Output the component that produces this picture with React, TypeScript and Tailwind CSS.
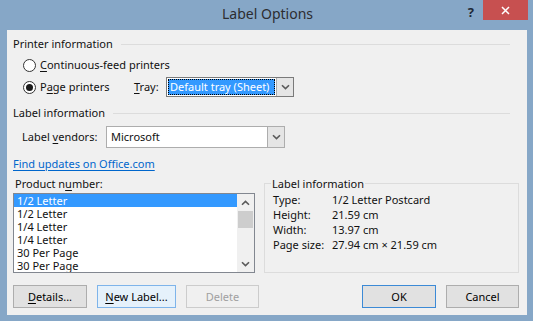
import { ReactNode } from "react";

const font = { fontFamily: '"Segoe UI", "Noto Sans", "Open Sans", sans-serif' };

function Key({ children }: { children: ReactNode }) {
  return <span className="underline underline-offset-2">{children}</span>;
}

function Chevron({ up = false }: { up?: boolean }) {
  return (
    <svg width="9" height="6" viewBox="0 0 9 6" className={up ? "rotate-180" : ""}>
      <path d="M1 1.2 L4.5 4.6 L8 1.2" fill="none" stroke="#5a5a5a" strokeWidth="1.6" />
    </svg>
  );
}

function Radio({ checked }: { checked?: boolean }) {
  return (
    <span className="flex h-[13px] w-[13px] items-center justify-center rounded-full border border-[#333] bg-white">
      {checked ? <span className="h-[7px] w-[7px] rounded-full bg-[#1a1a1a]" /> : null}
    </span>
  );
}

function Header({ children }: { children: ReactNode }) {
  return (
    <div className="flex h-4 items-center pl-[6px] pr-[17px]">
      <span>{children}</span>
      <span className="ml-2 h-px flex-1 bg-[#dcdcdc]" />
    </div>
  );
}

function Btn({
  children,
  w,
  kind = "normal",
}: {
  children: ReactNode;
  w: string;
  kind?: "normal" | "hot" | "default" | "off";
}) {
  const look = {
    normal: "border-[#adadad] bg-[#e1e1e1] text-black",
    hot: "border-[#7eb4ea] bg-[#e5f1fb] text-black",
    default: "border-[#3c8ad6] bg-[#e1e1e1] text-black",
    off: "border-[#cccccc] bg-[#f0f0f0] text-[#a0a0a0]",
  }[kind];
  return (
    <div className={`flex h-[23px] items-center justify-center border ${look} ${w}`}>{children}</div>
  );
}

const rows = ["1/2 Letter", "1/2 Letter", "1/4 Letter", "1/4 Letter", "30 Per Page", "30 Per Page"];

const info = [
  ["Type:", "1/2 Letter Postcard"],
  ["Height:", "21.59 cm"],
  ["Width:", "13.97 cm"],
  ["Page size:", "27.94 cm × 21.59 cm"],
];

export default function App() {
  return (
    <div
      className="flex h-[321px] w-[533px] flex-col bg-[#86a7c7] text-[11px] leading-[14px] text-[#111]"
      style={font}
    >
      <div className="relative flex h-[30px] items-center justify-center text-[14px] text-[#2d2d30]">
        <span className="-mt-[2px] ml-[2px]">Label Options</span>
        <span className="absolute right-[59px] top-[5px] text-[13px] font-bold text-[#1e2a36]">?</span>
        <span className="absolute right-[5px] top-0 flex h-5 w-[45px] items-center justify-center bg-[#c75050]">
          <svg width="9" height="9" viewBox="0 0 9 9">
            <path d="M1 1 L8 8 M8 1 L1 8" stroke="#fff" strokeWidth="1.5" />
          </svg>
        </span>
      </div>

      <div className="ml-[7px] mr-[6px] flex h-[285px] flex-col bg-[#f0f0f0] pt-[6px]">
        <Header>Printer information</Header>

        <div className="mt-[2px] flex h-[22px] items-center pl-[16px]">
          <Radio />
          <span className="ml-[4px]">
            <Key>C</Key>ontinuous-feed printers
          </span>
        </div>

        <div className="mt-px flex h-5 items-center pl-[16px]">
          <Radio checked />
          <span className="ml-[4px] w-[94px]">
            P<Key>a</Key>ge printers
          </span>
          <span className="w-[32px]">
            <Key>T</Key>ray:
          </span>
          <div className="flex h-5 w-[128px] border border-[#7a7a7a] bg-white">
            <div className="m-px flex flex-1 items-center overflow-hidden whitespace-nowrap border border-dotted border-black bg-[#3399ff] pl-px text-white">
              Default tray (Sheet)
            </div>
            <div className="flex w-[17px] items-center justify-center border-l border-[#adadad] bg-[#e5e5e5]">
              <Chevron />
            </div>
          </div>
        </div>

        <div className="mt-[8px]">
          <Header>Label information</Header>
        </div>

        <div className="mt-[5px] flex h-[22px] items-center pl-[15px]">
          <span className="w-[84px]">
            Label <Key>v</Key>endors:
          </span>
          <div className="flex h-[22px] w-[179px] border border-[#adadad] bg-white">
            <div className="flex flex-1 items-center pl-[4px]">Microsoft</div>
            <div className="flex w-[17px] items-center justify-center border-l border-[#adadad] bg-[#e5e5e5]">
              <Chevron />
            </div>
          </div>
        </div>

        <div className="mt-[8px] flex h-4 items-center pl-[6px]">
          <span className="text-[#0066cc] underline underline-offset-2">Find updates on Office.com</span>
        </div>

        <div className="mt-[4px] flex gap-[9px] pl-[6px]">
          <div className="flex w-[242px] flex-col">
            <div className="flex h-4 items-center pl-[2px]">
              Product n<Key>u</Key>mber:
            </div>
            <div className="mt-px flex h-[80px] border border-[#828790] bg-white">
              <div className="flex flex-1 flex-col overflow-hidden">
                {rows.map((r, i) => (
                  <div
                    key={i}
                    className={`flex h-[13px] shrink-0 items-center pl-[3px] leading-[12px] ${i === 0 ? "bg-[#3399ff] text-white" : ""}`}
                  >
                    {r}
                  </div>
                ))}
              </div>
              <div className="flex w-[17px] flex-col items-center bg-[#f0f0f0]">
                <div className="flex h-[17px] items-center justify-center">
                  <Chevron up />
                </div>
                <div className="h-[17px] w-[15px] bg-[#cdcdcd]" />
                <div className="flex-1" />
                <div className="flex h-[17px] items-center justify-center">
                  <Chevron />
                </div>
              </div>
            </div>
          </div>

          <div className="mt-[7px] h-[90px] w-[255px] border border-[#dcdcdc]">
            <div className="-mt-[8px] ml-[6px] w-fit bg-[#f0f0f0] px-px leading-4">Label information</div>
            <div className="flex flex-col pl-[8px]">
              {info.map(([k, v]) => (
                <div key={k} className="flex h-[15px] items-center">
                  <span className="w-[59px]">{k}</span>
                  <span>{v}</span>
                </div>
              ))}
            </div>
          </div>
        </div>

        <div className="mt-[12px] flex items-center pl-[6px] pr-[8px]">
          <Btn w="w-[74px]">
            <Key>D</Key>etails...
          </Btn>
          <div className="ml-[10px]">
            <Btn w="w-[79px]" kind="hot">
              <Key>N</Key>ew Label...
            </Btn>
          </div>
          <div className="ml-[10px]">
            <Btn w="w-[73px]" kind="off">
              Delete
            </Btn>
          </div>
          <div className="flex-1" />
          <Btn w="w-[74px]" kind="default">
            OK
          </Btn>
          <div className="ml-[10px]">
            <Btn w="w-[73px]">Cancel</Btn>
          </div>
        </div>
      </div>
    </div>
  );
}
